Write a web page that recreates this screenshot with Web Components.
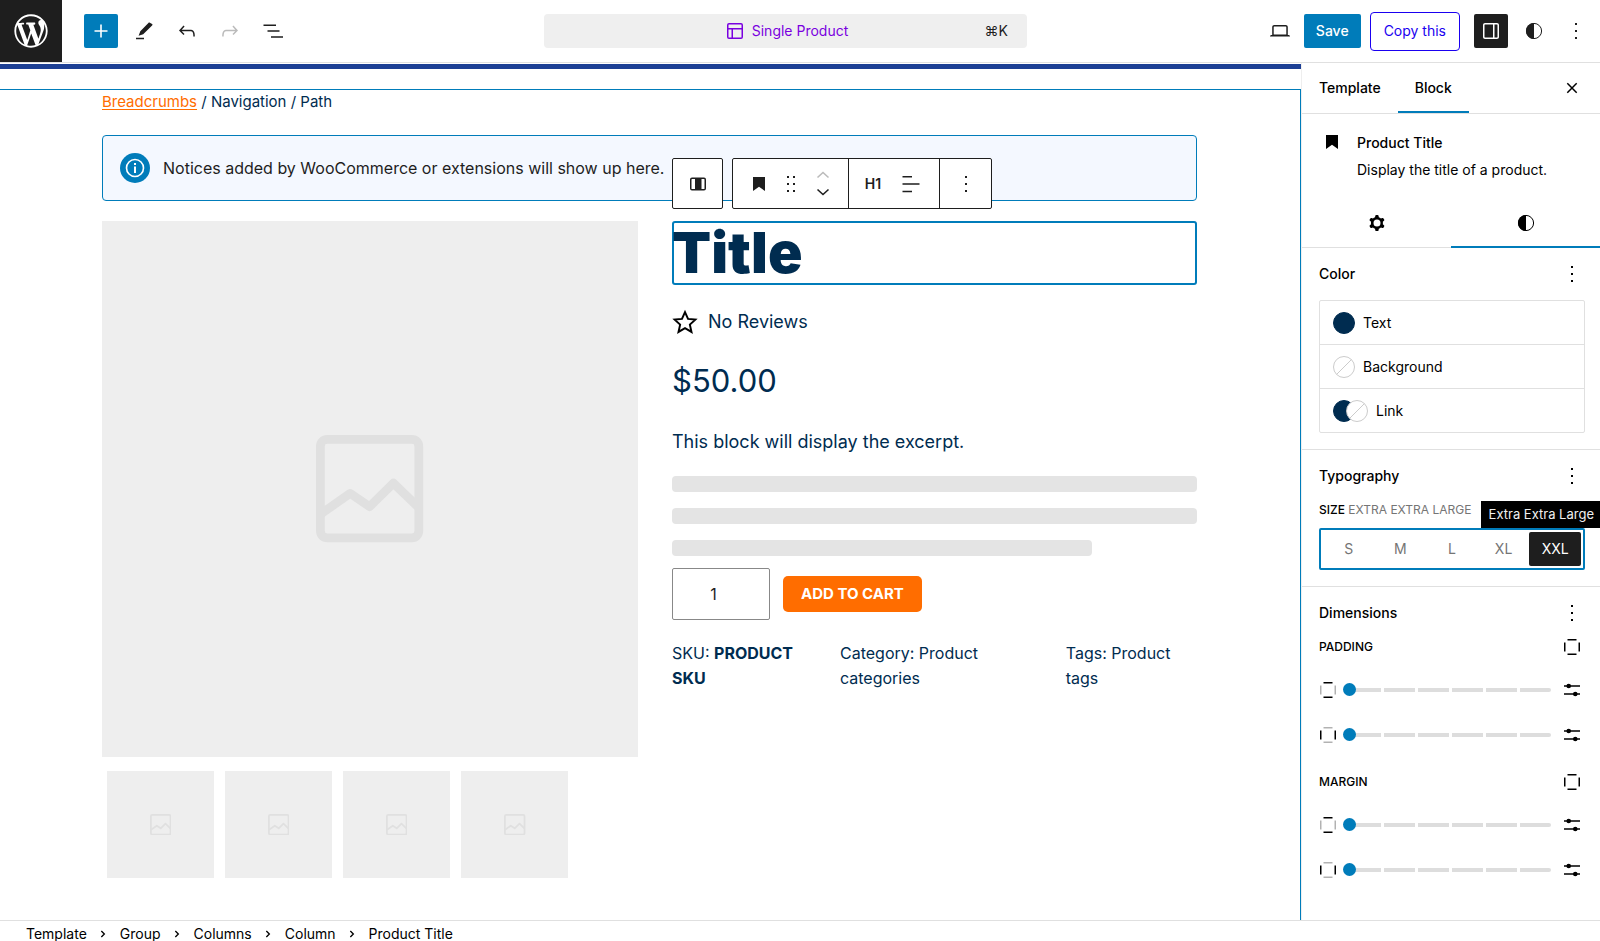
<!DOCTYPE html>
<html lang="en">
<head>
<meta charset="utf-8">
<title>Single Product – Editor</title>
<style>
  html, body { margin: 0; height: 100%; }
  body {
    --blue: #007cba;
    --ink: #1e1e1e;
    --navy: #002c50;
    --line: #e0e0e0;
    font: 14px/20px Inter, "Liberation Sans", sans-serif;
    color: var(--ink);
    background: #fff;
    overflow: hidden;
  }
</style>
</head>
<body>
<site-editor></site-editor>

<script>
const RESET = `
  *, *::before, *::after { box-sizing: border-box; }
  button, input { font: inherit; color: inherit; margin: 0; }
  button { background: none; border: 0; padding: 0; cursor: pointer; display: inline-flex; align-items: center; justify-content: center; }
  a { color: inherit; text-decoration: none; }
  h1, h2, h3, p, ol, ul, dl, dd { margin: 0; padding: 0; font: inherit; list-style: none; }
`;

function define(name, css, html) {
  const template = document.createElement('template');
  customElements.define(name, class extends HTMLElement {
    constructor() {
      super();
      template.innerHTML = `<style>${RESET}${css}</style>${typeof html === 'function' ? html(this) : html}`;
      this.attachShadow({ mode: 'open' }).append(template.content.cloneNode(true));
    }
  });
}

/* Icons on a 24 × 24 grid */
const ICONS = {
  wordpress: '<path transform="translate(2 2)" d="M20 10c0-5.51-4.49-10-10-10C4.48 0 0 4.49 0 10c0 5.52 4.48 10 10 10 5.51 0 10-4.48 10-10zM7.78 15.37L4.37 6.22c.55-.02 1.17-.08 1.17-.08.5-.06.44-1.13-.06-1.11 0 0-1.45.11-2.37.11-.18 0-.37 0-.58-.01C4.12 2.69 6.87 1.11 10 1.11c2.33 0 4.45.87 6.05 2.34-.68-.11-1.65.39-1.65 1.58 0 .74.45 1.36.9 2.1.35.61.55 1.36.55 2.46 0 1.49-1.4 5-1.4 5l-3.03-8.37c.54-.02.82-.17.82-.17.5-.05.44-1.25-.06-1.22 0 0-1.44.12-2.38.12-.87 0-2.33-.12-2.33-.12-.5-.03-.56 1.2-.06 1.22l.92.08 1.26 3.41zM17.41 10c.24-.64.74-1.87.43-4.25.7 1.29 1.05 2.71 1.05 4.25 0 3.29-1.73 6.24-4.4 7.78.97-2.59 1.94-5.2 2.92-7.78zM6.1 18.09C3.12 16.65 1.11 13.53 1.11 10c0-1.3.23-2.48.72-3.59C3.25 10.3 4.67 14.2 6.1 18.09zm4.03-6.63l2.58 6.98c-.86.29-1.76.45-2.71.45-.79 0-1.57-.11-2.29-.33.81-2.38 1.62-4.74 2.42-7.1z"/>',
  plus: '<path d="M11.2 5.5h1.6v5.7h5.7v1.6h-5.7v5.7h-1.6v-5.7H5.5v-1.6h5.7z"/>',
  edit: '<path d="M20.1 5.1l-2.2-1.4c-.5-.3-1.1-.2-1.5.2L8.3 12.2 6.6 16.8l4.6-1.6 8.9-8.7c.5-.4.5-1.1 0-1.4zM4 18.7h8v1.6H4z"/>',
  undo: '<path d="M18.3 11.7c-.6-.6-1.4-.9-2.3-.9H6.7l2.9-3.3-1.1-1-4.5 5L8.5 16l1-1-2.7-2.7H16c.5 0 .9.2 1.3.5 1 1 1 3.4 1 4.5v.3h1.5v-.2c0-1.5 0-4.3-1.5-5.7z"/>',
  redo: '<path transform="matrix(-1 0 0 1 24 0)" d="M18.3 11.7c-.6-.6-1.4-.9-2.3-.9H6.7l2.9-3.3-1.1-1-4.5 5L8.5 16l1-1-2.7-2.7H16c.5 0 .9.2 1.3.5 1 1 1 3.4 1 4.5v.3h1.5v-.2c0-1.5 0-4.3-1.5-5.7z"/>',
  list: '<path d="M2.5 5.5H15V7H2.5zM6.5 11.3H18.5v1.5H6.5zM10 17.3h12v1.5H10z"/>',
  layout: '<path d="M18 5.5H6a.5.5 0 00-.5.5v3h13V6a.5.5 0 00-.5-.5zm.5 5H10v8h8a.5.5 0 00.5-.5v-7.5zm-10 0h-3V18a.5.5 0 00.5.5h2.5v-8zM6 4h12a2 2 0 012 2v12a2 2 0 01-2 2H6a2 2 0 01-2-2V6a2 2 0 012-2z"/>',
  laptop: '<path d="M20.5 16h-.7V8c0-1.1-.9-2-2-2H6.2c-1.1 0-2 .9-2 2v8h-.7c-.8 0-1.5.7-1.5 1.5h20c0-.8-.7-1.5-1.5-1.5zM5.7 8c0-.3.2-.5.5-.5h11.6c.3 0 .5.2.5.5v7.6H5.7V8z"/>',
  drawer: '<path d="M18 4H6c-1.1 0-2 .9-2 2v12c0 1.1.9 2 2 2h12c1.1 0 2-.9 2-2V6c0-1.1-.9-2-2-2zm-4 14.5H6c-.3 0-.5-.2-.5-.5V6c0-.3.2-.5.5-.5h8v13zm4.5-.5c0 .3-.2.5-.5.5h-2.5v-13H18c.3 0 .5.2.5.5v12z"/>',
  styles: '<circle cx="12" cy="12" r="7.6" fill="none" stroke="currentColor"/><path d="M12 4a8 8 0 000 16z"/>',
  dots: '<path d="M11 4h2v2h-2zM11 11h2v2h-2zM11 18h2v2h-2z"/>',
  close: '<path d="M7.3 7.3l9.4 9.4M16.7 7.3l-9.4 9.4" fill="none" stroke="currentColor" stroke-width="1.5"/>',
  bookmark: '<path d="M6 5h12v14l-6-4.2L6 19z"/>',
  gear: '<path fill-rule="evenodd" clip-rule="evenodd" d="M10.289 4.836A1 1 0 0111.275 4h1.306a1 1 0 01.987.836l.244 1.466c.787.26 1.503.679 2.108 1.218l1.393-.522a1 1 0 011.216.437l.653 1.13a1 1 0 01-.23 1.273l-1.148.944a6.025 6.025 0 010 2.435l1.149.946a1 1 0 01.23 1.272l-.653 1.13a1 1 0 01-1.216.437l-1.394-.522c-.605.54-1.32.958-2.108 1.218l-.244 1.466a1 1 0 01-.987.836h-1.306a1 1 0 01-.986-.836l-.244-1.466a5.995 5.995 0 01-2.108-1.218l-1.394.522a1 1 0 01-1.217-.436l-.653-1.131a1 1 0 01.23-1.272l1.149-.946a6.026 6.026 0 010-2.435l-1.148-.944a1 1 0 01-.23-1.272l.653-1.131a1 1 0 011.217-.437l1.393.522a5.994 5.994 0 012.108-1.218l.244-1.466zM15.5 12a3.5 3.5 0 11-7 0 3.5 3.5 0 017 0z"/>',
  column: '<path fill-rule="evenodd" d="M6 5.5h12a2 2 0 012 2v9a2 2 0 01-2 2H6a2 2 0 01-2-2v-9a2 2 0 012-2zM6 7a.5.5 0 00-.5.5v9a.5.5 0 00.5.5h3V7zM15.5 7v10H18a.5.5 0 00.5-.5v-9A.5.5 0 0018 7z"/>',
  drag: '<path d="M8 4h2v2H8zM14 4h2v2h-2zM8 11h2v2H8zM14 11h2v2h-2zM8 18h2v2H8zM14 18h2v2h-2z"/>',
  up: '<path d="M6.5 14.5L12 9.5l5.5 5" fill="none" stroke="currentColor" stroke-width="1.6"/>',
  down: '<path d="M6.5 9.5L12 14.5l5.5-5" fill="none" stroke="currentColor" stroke-width="1.6"/>',
  right: '<path d="M9.5 7.5l4.5 4.5-4.5 4.5" fill="none" stroke="currentColor" stroke-width="2"/>',
  align: '<path d="M3.5 4H13v1.5H3.5zM3.5 11.3h17v1.5h-17zM3.5 18.8H13v1.5H3.5z"/>',
  star: '<path d="M12 2.8l2.8 6.3 6.8.7-5.1 4.6 1.5 6.8-6-3.5-6 3.5 1.5-6.8-5.1-4.6 6.8-.7z" fill="none" stroke="currentColor" stroke-width="1.8"/>',
  sliders: '<path d="M4 7.2h16v1.5H4zM4 15.3h16v1.5H4z"/><circle cx="8.7" cy="8" r="2.3"/><circle cx="15.3" cy="16" r="2.3"/>',
  sides: '<path d="M7.5 4h9v1.5h-9zM7.5 18.5h9V20h-9z" style="fill-opacity: var(--v, 1)"/><path d="M4 7.5h1.5v9H4zM18.5 7.5H20v9h-1.5z" style="fill-opacity: var(--h, 1)"/>',
  info: '<circle cx="12" cy="12" r="12"/><circle cx="12" cy="12" r="6.8" fill="none" stroke="#fff" stroke-width="1.3"/><path fill="#fff" d="M11.2 8h1.6v1.5h-1.6zM11.2 10.7h1.6V16h-1.6z"/>'
};

define('ui-icon', `
  :host { display: inline-flex; flex: none; width: var(--size, 24px); height: var(--size, 24px); }
  svg { width: 100%; height: 100%; fill: currentColor; display: block; }
`, el => `<svg viewBox="0 0 24 24" aria-hidden="true">${ICONS[el.getAttribute('name')]}</svg>`);

define('image-placeholder', `
  :host { display: grid; place-items: center; aspect-ratio: 1; background: #eee; }
  svg { width: 20%; fill: none; stroke: #e0e0e0; stroke-width: 9; stroke-linejoin: round; }
`, `<svg viewBox="0 0 110 110" aria-hidden="true"><rect x="4.5" y="4.5" width="101" height="101" rx="7"/><path d="M5 81l30-21 20 13.5 24.5-24 26 25"/></svg>`);

define('editor-header', `
  :host { display: grid; grid-template-columns: 544px 483px 1fr; align-items: center; height: 63px; border-bottom: 1px solid var(--line); }
  .start { display: flex; align-items: center; gap: 9px; }
  .home { display: grid; place-items: center; width: 62px; height: 62px; background: var(--ink); color: #fff; --size: 40px; margin-right: 13px; }
  .tool { width: 34px; height: 34px; border-radius: 2px; }
  .primary { background: var(--blue); color: #fff; }
  .off { color: #bbb; }
  .command { display: grid; grid-template-columns: 1fr auto 1fr; align-items: center; height: 34px; border-radius: 4px; background: #efefef; width: 100%; }
  .name { grid-column: 2; display: flex; align-items: center; gap: 5px; color: #7a00df; }
  kbd { font: inherit; justify-self: end; padding-right: 19px; }
  .end { display: flex; align-items: center; justify-content: flex-end; padding-right: 7px; }
  .save { height: 34px; padding: 0 12px; border-radius: 2px; font-weight: 500; margin: 0 9px 0 12px; }
  .copy { height: 39px; padding: 0 13px; border: 1px solid #1a00f0; border-radius: 4px; color: #1a00f0; margin-right: 14px; }
  .dark { background: var(--ink); color: #fff; margin-right: 9px; }
  .more { margin-left: 8px; }
`, `
  <div class="start">
    <a class="home" href="#" aria-label="Open navigation"><ui-icon name="wordpress"></ui-icon></a>
    <button class="tool primary" aria-label="Toggle block inserter"><ui-icon name="plus"></ui-icon></button>
    <button class="tool" aria-label="Tools"><ui-icon name="edit"></ui-icon></button>
    <button class="tool" aria-label="Undo"><ui-icon name="undo"></ui-icon></button>
    <button class="tool off" aria-label="Redo"><ui-icon name="redo"></ui-icon></button>
    <button class="tool" aria-label="List view"><ui-icon name="list"></ui-icon></button>
  </div>
  <button class="command"><span class="name"><ui-icon name="layout"></ui-icon>Single Product</span><kbd>⌘K</kbd></button>
  <div class="end">
    <button aria-label="View"><ui-icon name="laptop"></ui-icon></button>
    <button class="save primary">Save</button>
    <button class="copy">Copy this</button>
    <button class="tool dark" aria-label="Settings"><ui-icon name="drawer"></ui-icon></button>
    <button class="tool" aria-label="Styles"><ui-icon name="styles"></ui-icon></button>
    <button class="tool more" aria-label="Options"><ui-icon name="dots"></ui-icon></button>
  </div>
`);

define('block-toolbar', `
  :host { display: flex; gap: 9px; color: var(--ink); }
  div { display: flex; height: 51px; background: #fff; border: 1px solid var(--ink); border-radius: 2px; }
  .parent { width: 51px; justify-content: center; }
  span { display: flex; align-items: center; justify-content: center; }
  span + span { border-left: 1px solid var(--ink); }
  .a { width: 115px; gap: 8px; }
  .b { width: 91px; gap: 18px; font-weight: 600; }
  .c { width: 52px; }
  .movers { display: flex; flex-direction: column; }
  .movers button { height: 17px; }
  .movers button:first-child { color: #bbb; }
`, `
  <div class="parent"><button aria-label="Select parent block: Column"><ui-icon name="column"></ui-icon></button></div>
  <div role="toolbar" aria-label="Block tools">
    <span class="a">
      <button aria-label="Product Title"><ui-icon name="bookmark"></ui-icon></button>
      <button aria-label="Drag"><ui-icon name="drag"></ui-icon></button>
      <section class="movers"><button aria-label="Move up"><ui-icon name="up"></ui-icon></button><button aria-label="Move down"><ui-icon name="down"></ui-icon></button></section>
    </span>
    <span class="b"><button aria-label="Change level">H1</button><button aria-label="Align text"><ui-icon name="align"></ui-icon></button></span>
    <span class="c"><button aria-label="Options"><ui-icon name="dots"></ui-icon></button></span>
  </div>
`);

define('store-notice', `
  :host { display: flex; align-items: center; gap: 13px; height: 66px; padding: 0 17px; border: 1px solid var(--blue); border-radius: 4px; background: #f4f8ff; color: var(--ink); font-size: 16px; }
  ui-icon { --size: 30px; color: var(--blue); }
`, `<ui-icon name="info"></ui-icon><slot></slot>`);

define('product-gallery', `
  :host { display: block; }
  div { display: grid; grid-template-columns: repeat(4, 1fr); gap: 11px; padding: 14px 13% 0 5px; }
`, `
  <image-placeholder></image-placeholder>
  <div><image-placeholder></image-placeholder><image-placeholder></image-placeholder><image-placeholder></image-placeholder><image-placeholder></image-placeholder></div>
`);

define('product-summary', `
  :host { display: block; }
  .title { position: relative; height: 64px; box-shadow: inset 0 0 0 2px var(--blue); border-radius: 3px; }
  block-toolbar { position: absolute; left: 0; bottom: 76px; }
  h1 { font-size: 57px; font-weight: 900; line-height: 64px; }
  .reviews { display: flex; align-items: center; gap: 10px; margin-top: 24px; font-size: 18px; line-height: 24px; }
  .reviews ui-icon { --size: 26px; color: #000; }
  .price { margin-top: 26px; font-size: 31px; line-height: 40px; }
  .excerpt { margin: 26px 0 19px; font-size: 18px; line-height: 30px; }
  .bars { display: grid; gap: 16px; }
  .bars i { height: 16px; border-radius: 4px; background: #e4e4e4; }
  .bars i:last-child { width: 80%; }
  .cart { display: flex; align-items: center; gap: 13px; margin-top: 12px; }
  input { width: 98px; height: 52px; border: 1px solid #888; border-radius: 2px; font-size: 16px; text-align: center; padding: 0; background: #fff; color: var(--ink); }
  .cart button { height: 36px; padding: 0 18px; border-radius: 5px; background: #ff6d00; color: #fff; font-size: 15px; font-weight: 700; }
  .meta { display: grid; grid-template-columns: 32% 43% 1fr; margin-top: 21px; font-size: 16px; line-height: 25px; }
  .meta p { padding-right: 40px; }
  .meta p:last-child { padding-right: 20px; }
  b { font-weight: 700; }
`, `
  <div class="title">
    <h1>Title</h1>
    <block-toolbar></block-toolbar>
  </div>
  <div class="reviews"><ui-icon name="star"></ui-icon>No Reviews</div>
  <p class="price">$50.00</p>
  <p class="excerpt">This block will display the excerpt.</p>
  <div class="bars"><i></i><i></i><i></i></div>
  <div class="cart"><input type="number" value="1" aria-label="Quantity"><button>ADD TO CART</button></div>
  <div class="meta"><p>SKU: <b>PRODUCT</b> <b>SKU</b></p><p>Category: Product categories</p><p>Tags: Product tags</p></div>
`);

define('editor-canvas', `
  :host { display: flex; flex-direction: column; color: var(--navy); min-width: 0; padding-top: 1px; }
  .strip { height: 5px; background: #1c3f94; }
  main { flex: 1; margin-top: 20px; border: solid var(--blue); border-width: 1px 1px 0 0; padding: 0 103px 0 102px; }
  nav { font-size: 15px; line-height: 24px; }
  nav a { color: #ff6d00; text-decoration: underline; text-underline-offset: 2px; }
  store-notice { margin: 21px 0 20px; }
  .columns { display: grid; grid-template-columns: 536fr 525fr; gap: 34px; align-items: start; }
`, `
  <div class="strip"></div>
  <main>
    <nav aria-label="Breadcrumbs"><a href="#">Breadcrumbs</a> / Navigation / Path</nav>
    <store-notice>Notices added by WooCommerce or extensions will show up here.</store-notice>
    <div class="columns"><product-gallery></product-gallery><product-summary></product-summary></div>
  </main>
`);

define('settings-panel', `
  :host { display: block; padding: 0 15px 16px 17px; border-bottom: 1px solid var(--line); }
  :host(:last-of-type) { border-bottom: 0; }
  header { display: flex; align-items: center; justify-content: space-between; height: 52px; margin-right: 1px; }
  h2 { font-weight: 500; }
`, el => `<header><h2>${el.getAttribute('heading')}</h2><button aria-label="Options"><ui-icon name="dots"></ui-icon></button></header><slot></slot>`);

define('color-list', `
  :host { display: block; border: 1px solid var(--line); border-radius: 2px; }
  button { display: flex; justify-content: flex-start; gap: 8px; width: 100%; height: 43px; padding: 0 13px; }
  button + button { height: 44px; border-top: 1px solid var(--line); }
  span { display: flex; }
  i { width: 22px; height: 22px; border-radius: 50%; border: 1px solid #ccc; background: linear-gradient(135deg, #fff 48%, #ccc 48%, #ccc 52%, #fff 52%); }
  i.navy { background: var(--navy); border-color: var(--navy); }
  i + i { margin-left: -9px; }
`, `
  <button><span><i class="navy"></i></span>Text</button>
  <button><span><i></i></span>Background</button>
  <button><span><i class="navy"></i><i></i></span>Link</button>
`);

define('size-picker', `
  :host { display: block; }
  .label { position: relative; font-size: 12px; line-height: 16px; padding-bottom: 10px; }
  b { font-weight: 500; } em { font-style: normal; color: #757575; }
  .tip { position: absolute; right: -15px; bottom: 0; padding: 0 6px 0 8px; background: #000; color: #f0f0f0; font-size: 13px; line-height: 27px; white-space: nowrap; }
  .group { display: grid; grid-template-columns: repeat(5, 1fr); height: 42px; padding: 2px; border: 2px solid var(--blue); border-radius: 2px; }
  button { color: #757575; border-radius: 2px; }
  .on { background: var(--ink); color: #fff; }
`, `
  <div class="label"><b>SIZE</b> <em>EXTRA EXTRA LARGE</em><span class="tip" role="tooltip">Extra Extra Large</span></div>
  <div class="group" role="group" aria-label="Font size"><button>S</button><button>M</button><button>L</button><button>XL</button><button class="on" aria-pressed="true">XXL</button></div>
`);

define('range-row', `
  :host { display: flex; align-items: center; height: 24px; margin-right: 1px; }
  :host([axis="v"]) .side { --h: .3; }
  :host([axis="h"]) .side { --v: .3; }
  .side { margin: 0 3px 0 -3px; }
  input { flex: 1; min-width: 0; height: 14px; appearance: none; background: none; margin-right: 9px; }
  input::-webkit-slider-runnable-track { height: 4px; border-radius: 2px;
    background: repeating-linear-gradient(90deg, #ddd 0 calc((100% + 3px) / 6 - 3px), transparent 0 calc((100% + 3px) / 6)) right / calc(100% - 7px) 100% no-repeat; }
  input::-webkit-slider-thumb { appearance: none; width: 13px; height: 13px; margin-top: -5px; border-radius: 50%; background: var(--blue); }
`, el => `<ui-icon class="side" name="sides"></ui-icon><input type="range" min="0" max="6" value="0" aria-label="${el.getAttribute('label')}"><button aria-label="Set custom size"><ui-icon name="sliders"></ui-icon></button>`);

define('spacing-group', `
  :host { display: block; }
  header { display: flex; align-items: center; justify-content: space-between; height: 16px; margin: 0 1px 23px 0; font-size: 12px; font-weight: 500; }
  range-row { margin-bottom: 21px; }
  range-row:last-child { margin-bottom: 0; }
`, el => { const n = el.getAttribute('name'); return `
  <header>${n}<button aria-label="Unlink sides"><ui-icon name="sides"></ui-icon></button></header>
  <range-row axis="v" label="${n} vertical"></range-row>
  <range-row axis="h" label="${n} horizontal"></range-row>`; });

define('editor-sidebar', `
  :host { display: block; border-left: 1px solid #eee; background: #fff; color: #000; min-height: 0; }
  .tabs { display: flex; align-items: stretch; height: 51px; border-bottom: 1px solid var(--line); padding-right: 16px; }
  .tabs button { padding: 0 17px; font-weight: 500; }
  .tabs .close { margin-left: auto; padding: 0; }
  .tabs .on { box-shadow: inset 0 -2px var(--blue); }
  .card { display: flex; gap: 13px; padding: 16px 18px 0; height: 84px; }
  h2 { font-weight: 500; line-height: 26px; }
  .card p { line-height: 28px; }
  .modes { display: grid; grid-template-columns: 1fr 1fr; height: 50px; border-bottom: 1px solid var(--line); }
  .modes .on { box-shadow: inset 0 -2px var(--blue); margin-bottom: -1px; }
  spacing-group + spacing-group { margin-top: 27px; }
`, `
  <div class="tabs"><button>Template</button><button class="on">Block</button><button class="close" aria-label="Close"><ui-icon name="close"></ui-icon></button></div>
  <div class="card"><ui-icon name="bookmark"></ui-icon><div><h2>Product Title</h2><p>Display the title of a product.</p></div></div>
  <div class="modes"><button aria-label="Settings"><ui-icon name="gear"></ui-icon></button><button class="on" aria-label="Styles"><ui-icon name="styles"></ui-icon></button></div>
  <settings-panel heading="Color"><color-list></color-list></settings-panel>
  <settings-panel heading="Typography"><size-picker></size-picker></settings-panel>
  <settings-panel heading="Dimensions"><spacing-group name="PADDING"></spacing-group><spacing-group name="MARGIN"></spacing-group></settings-panel>
`);

define('block-path', `
  :host { display: block; height: 21px; border-top: 1px solid var(--line); padding: 4px 26px 0; color: #000; }
  ol { display: flex; line-height: 18px; }
  li { display: flex; align-items: center; }
  ui-icon { --size: 16px; margin: 0 9px 0 8px; }
`, `
  <ol>
    <li><a href="#">Template</a></li>
    <li><ui-icon name="right"></ui-icon><a href="#">Group</a></li>
    <li><ui-icon name="right"></ui-icon><a href="#">Columns</a></li>
    <li><ui-icon name="right"></ui-icon><a href="#">Column</a></li>
    <li><ui-icon name="right"></ui-icon><a href="#" aria-current="true">Product Title</a></li>
  </ol>
`);

define('site-editor', `
  :host { display: grid; grid-template: auto minmax(0, 1fr) auto / minmax(0, 1fr) 299px; height: 100vh; }
  editor-header, block-path { grid-column: 1 / -1; }
`, `
  <editor-header></editor-header>
  <editor-canvas></editor-canvas>
  <editor-sidebar></editor-sidebar>
  <block-path></block-path>
`);
</script>
</body>
</html>
